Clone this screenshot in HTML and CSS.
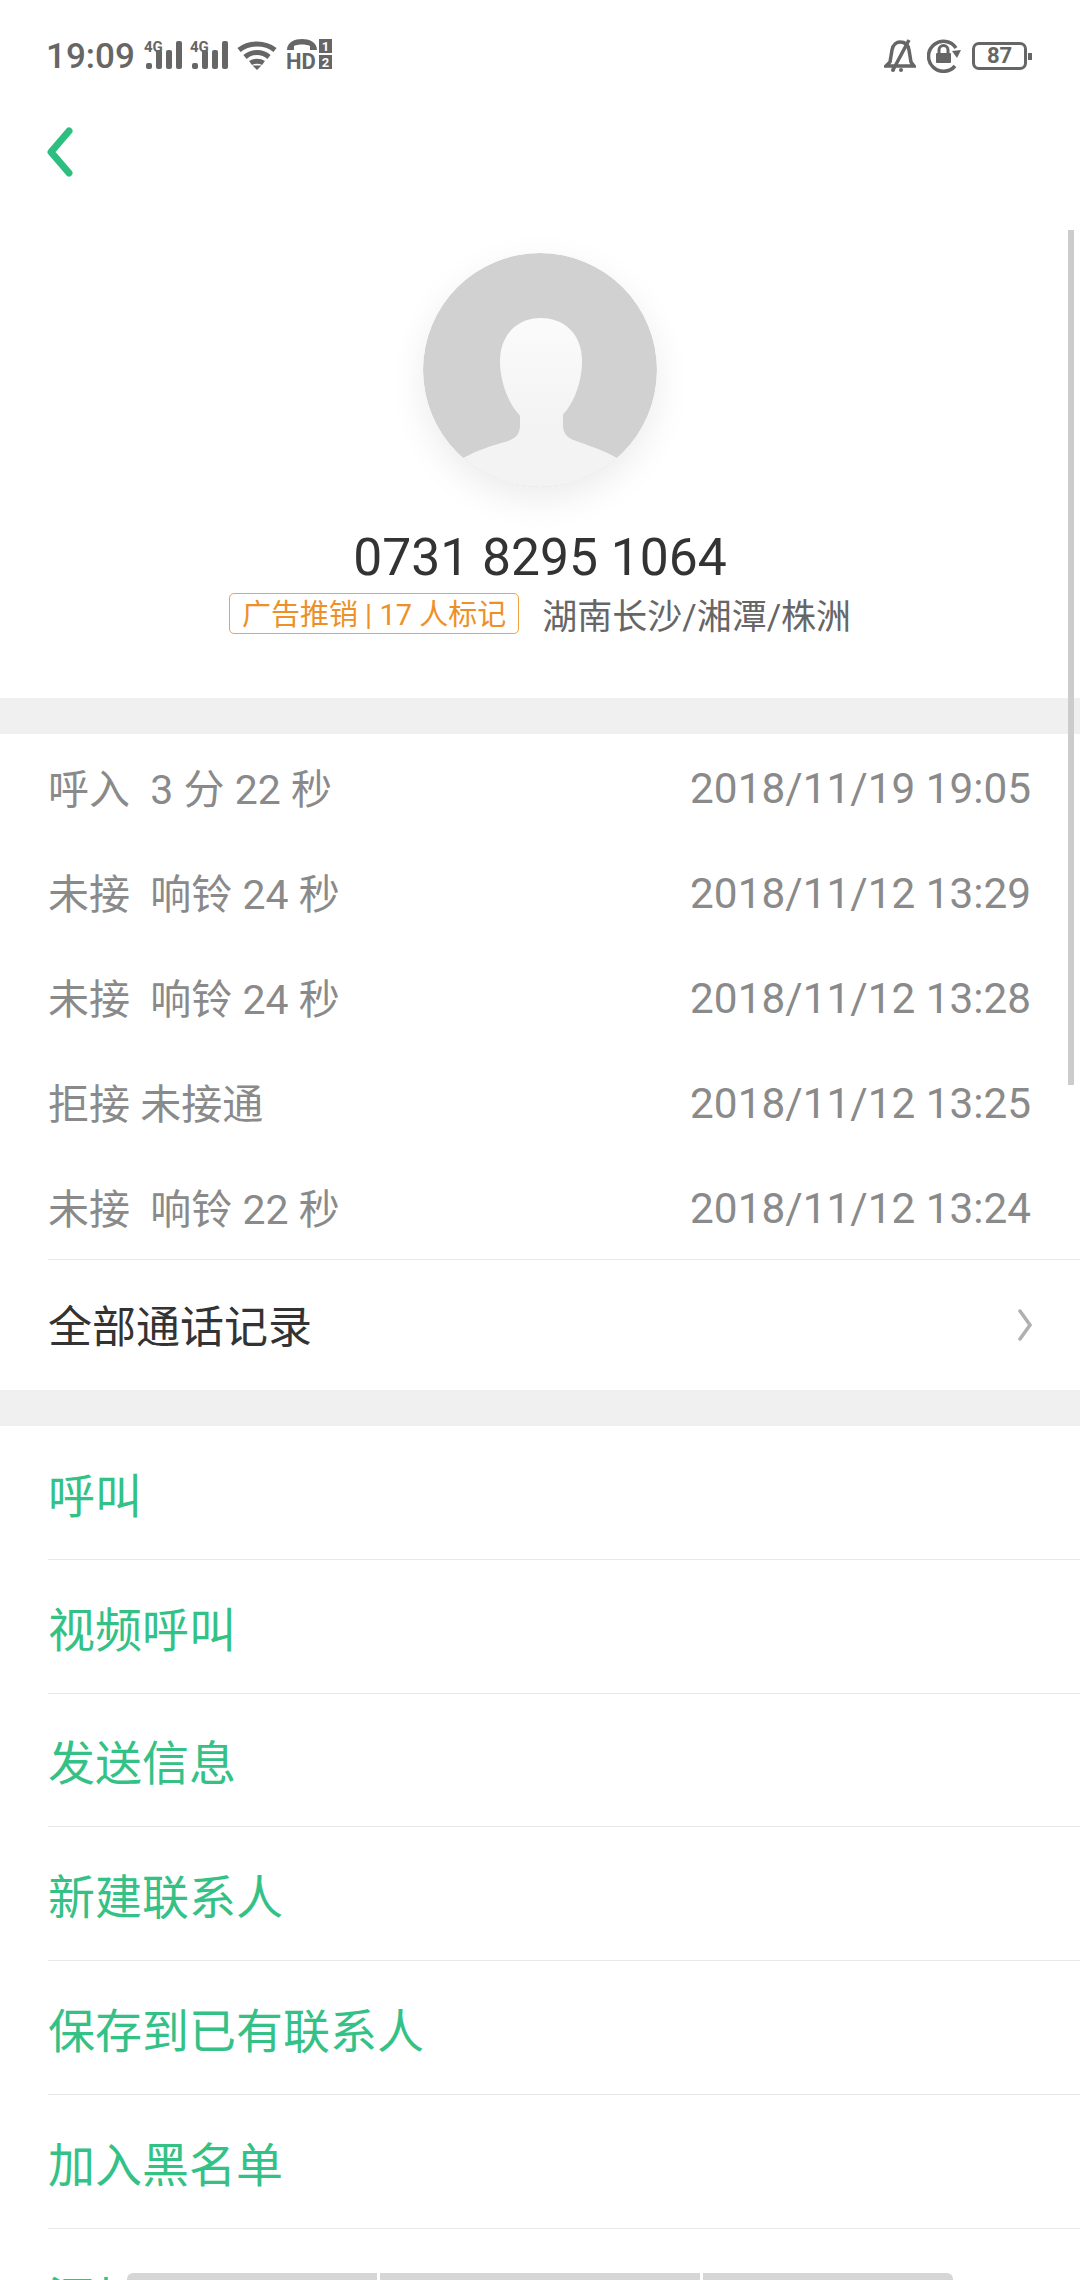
FILE: index.html
```html
<!DOCTYPE html>
<html lang="zh-CN">
<head>
    <meta charset="UTF-8">
    <meta name="viewport" content="width=device-width, initial-scale=1.0">
    <title>通话详情</title>
    <link rel="stylesheet" href="styles.css">
</head>
<body>
    <div id="status-bar">
        <span class="time">19:09</span>
        <svg class="icon-signal" width="38" height="36" viewBox="0 0 38 36">
            <text x="0" y="14" class="mini">4G</text>
            <rect x="2" y="25" width="6" height="6" rx="2"/>
            <rect x="12" y="12" width="6" height="19" rx="2"/>
            <rect x="22" y="12" width="6" height="19" rx="2"/>
            <rect x="32" y="3" width="6" height="28" rx="2"/>
        </svg>
        <svg class="icon-signal" width="38" height="36" viewBox="0 0 38 36">
            <text x="0" y="14" class="mini">4G</text>
            <rect x="2" y="25" width="6" height="6" rx="2"/>
            <rect x="12" y="12" width="6" height="19" rx="2"/>
            <rect x="22" y="12" width="6" height="19" rx="2"/>
            <rect x="32" y="3" width="6" height="28" rx="2"/>
        </svg>
        <svg class="icon-wifi" width="40" height="30" viewBox="0 0 40 30">
            <path d="M2 9 C12 1 28 1 38 9" />
            <path d="M8 16 C15 10 25 10 32 16" />
            <path d="M13.500 22 C17 19.500 23 19.500 26.500 22" />
            <polygon points="20,29 15.500,24.500 24.500,24.500" class="solid"/>
        </svg>
        <svg class="icon-hd" width="46" height="44" viewBox="0 0 46 44">
            <path class="handset" d="M1 16 C1 8 9 5 16 5 C23 5 31 8 31 16 L24 16 L24 12 C20 10 12 10 8 12 L8 16 Z"/>
            <text x="0" y="35" class="hd-text">HD</text>
            <rect x="33" y="5" width="13" height="14"/>
            <rect x="33" y="21" width="13" height="14"/>
            <text x="39.500" y="17" class="sim">1</text>
            <text x="39.500" y="33" class="sim">2</text>
        </svg>
        <div class="status-right">
            <svg class="icon-bell" width="32" height="34" viewBox="0 0 32 34">
                <path d="M6 23 L8 11 C9 5 13 3 16 3 C20 3 24 5 25 11 L27 23 L30 27 L2 27 Z"/>
                <path d="M25 1 L9 31"/>
                <circle class="solid" cx="9" cy="31" r="2"/>
                <circle class="solid" cx="17" cy="31" r="2"/>
            </svg>
            <svg class="icon-lock" width="34" height="34" viewBox="0 0 34 34">
                <path d="M28 27 A15 15 0 1 1 29 9"/>
                <polygon class="solid" points="25,12 34,11 30,19"/>
                <rect class="solid" x="9" y="14" width="15" height="10" rx="1"/>
                <path class="thin" d="M12 14 V11 A4.500 4.500 0 0 1 21 11 V14"/>
            </svg>
            <div class="battery"><span class="level">87</span></div>
            <span class="battery-tip"></span>
        </div>
    </div>

    <div id="top-bar">
        <svg width="26" height="50" viewBox="0 0 26 50">
            <path d="M22 4 L4 25 L22 46" />
        </svg>
    </div>

    <!-- Fiche du numéro -->
    <div id="profile">
        <svg class="avatar" width="234" height="234" viewBox="0 0 234 234">
            <defs>
                <linearGradient id="head-fill" x1="0" y1="0" x2="0" y2="1">
                    <stop offset="0" stop-color="#fbfbfb"/>
                    <stop offset="1" stop-color="#f3f3f3"/>
                </linearGradient>
            </defs>
            <circle cx="117" cy="117" r="117" fill="#d1d1d1"/>
            <path fill="#f3f3f3" d="M40 205 C55 197 70 192 82 189 C92 186 97 182 97 172 L97 155 L140 155 L140 172 C140 182 146 186 156 189 C170 194 182 198 194 205 A117 117 0 0 1 40 205 Z"/>
            <path fill="url(#head-fill)" d="M118 65 C141 65 159 81 159 108 C159 140 140 173 118 173 C96 173 77 140 77 108 C77 81 95 65 118 65 Z"/>
        </svg>
        <div class="number">0731 8295 1064</div>
        <div class="meta">
            <span class="tag">广告推销 | 17 人标记</span>
            <span class="location">湖南长沙/湘潭/株洲</span>
        </div>
    </div>

    <div class="band"></div>

    <!-- Historique des appels -->
    <div id="history">
        <div class="call"><span class="call-type">呼入  3 分 22 秒</span><span class="call-date">2018/11/19 19:05</span></div>
        <div class="call"><span class="call-type">未接  响铃 24 秒</span><span class="call-date">2018/11/12 13:29</span></div>
        <div class="call"><span class="call-type">未接  响铃 24 秒</span><span class="call-date">2018/11/12 13:28</span></div>
        <div class="call"><span class="call-type">拒接 未接通</span><span class="call-date">2018/11/12 13:25</span></div>
        <div class="call"><span class="call-type">未接  响铃 22 秒</span><span class="call-date">2018/11/12 13:24</span></div>
        <div class="all-calls">
            <span>全部通话记录</span>
            <svg width="14" height="32" viewBox="0 0 14 32">
                <path d="M2 2 L12 16 L2 30"/>
            </svg>
        </div>
    </div>

    <div class="band"></div>

    <!-- Actions -->
    <div id="actions">
        <div class="action">呼叫</div>
        <div class="action">视频呼叫</div>
        <div class="action">发送信息</div>
        <div class="action">新建联系人</div>
        <div class="action">保存到已有联系人</div>
        <div class="action">加入黑名单</div>
        <div class="action">添加标记</div>
    </div>

    <div id="scrollbar"></div>
    <div id="bottom-tabs">
        <span class="tab tab-first"></span>
        <span class="tab tab-middle"></span>
        <span class="tab tab-last"></span>
    </div>
</body>
</html>
```
FILE: styles.css
```css
html, body {
    margin: 0;
    padding: 0;
}

body {
    position: relative;
    width: 1080px;
    height: 2280px;
    overflow: hidden;
    background-color: #fff;
    font-family: Roboto, "Noto Sans CJK SC", sans-serif;
    color: #333;
}

/* Barre d'état */
#status-bar {
    display: flex;
    align-items: center;
    height: 112px;
    padding-left: 46px;
    padding-right: 48px;
    color: #666;
    box-sizing: border-box;
}

.time {
    width: 98px;
    font-size: 35px;
    font-weight: 500;
}

#status-bar svg {
    fill: #666;
    flex: none;
}

.icon-signal {
    margin-right: 8px;
}

.icon-wifi {
    margin-right: 9px;
    margin-left: 1px;
}

.icon-wifi path {
    fill: none;
    stroke: #666;
    stroke-width: 5;
}

.mini {
    font-family: Roboto, sans-serif;
    font-size: 15px;
    font-weight: 700;
}

.hd-text {
    font-family: Roboto, sans-serif;
    font-size: 22px;
    font-weight: 700;
}

.sim {
    font-family: Roboto, sans-serif;
    font-size: 13px;
    font-weight: 700;
    fill: #fff;
    text-anchor: middle;
}

.status-right {
    display: flex;
    align-items: center;
    margin-left: auto;
}

.icon-bell {
    margin-right: 11px;
}

#status-bar .icon-bell path,
#status-bar .icon-lock path {
    fill: none;
    stroke: #666;
    stroke-width: 3.500;
}

#status-bar .icon-lock .thin {
    stroke-width: 3;
}

.icon-lock {
    margin-right: 11px;
}

.battery {
    display: flex;
    align-items: center;
    justify-content: center;
    box-sizing: border-box;
    width: 55px;
    height: 28px;
    border: 3px solid #666;
    border-radius: 7px;
}

.level {
    font-size: 22px;
    font-weight: 700;
    line-height: 1;
}

.battery-tip {
    width: 4px;
    height: 7px;
    margin-left: 1px;
    background-color: #666;
}

/* Retour */
#top-bar {
    display: flex;
    align-items: center;
    height: 80px;
    padding-left: 47px;
}

#top-bar path {
    fill: none;
    stroke: #2dbf7f;
    stroke-width: 7;
    stroke-linecap: round;
    stroke-linejoin: round;
}

/* Fiche */
#profile {
    display: flex;
    flex-direction: column;
    align-items: center;
    padding-top: 61px;
    padding-bottom: 64px;
}

.avatar {
    border-radius: 50%;
    box-shadow: 0 12px 36px rgba(0, 0, 0, 0.08);
}

.number {
    margin-top: 41px;
    font-size: 51.600px;
    line-height: 60px;
    color: #333;
}

.meta {
    display: flex;
    align-items: center;
    gap: 23px;
    margin-top: 5px;
    height: 41px;
}

.tag {
    box-sizing: border-box;
    height: 41px;
    padding: 0 12px;
    border: 1px solid #f0a545;
    border-radius: 5px;
    font-size: 29px;
    line-height: 43px;
    color: #ee9028;
    white-space: pre;
}

.location {
    padding-bottom: 1px;
    font-size: 35px;
    color: #666;
}

.band {
    height: 36px;
    background-color: #f0f0f0;
}

/* Historique */
#history {
    padding-left: 48px;
}

.call {
    display: flex;
    justify-content: space-between;
    align-items: center;
    height: 105px;
    padding-right: 49px;
    color: #8a8a8a;
}

.call-type {
    margin-bottom: 2px;
    font-size: 41px;
    white-space: pre;
}

.call-date {
    margin-top: 3px;
    font-size: 42.300px;
}

.all-calls {
    display: flex;
    justify-content: space-between;
    align-items: center;
    box-sizing: border-box;
    height: 131px;
    padding-right: 48px;
    border-top: 1px solid #e8e8e8;
    font-size: 44px;
    color: #333;
}

.all-calls span {
    margin-bottom: 2px;
}

.all-calls path {
    fill: none;
    stroke: #b0b0b0;
    stroke-width: 3.500;
    stroke-linecap: round;
}

/* Actions */
#actions {
    padding-left: 48px;
}

.action {
    display: flex;
    align-items: center;
    box-sizing: border-box;
    height: 133.800px;
    border-bottom: 1px solid #e8e8e8;
    font-size: 47px;
    color: #34c186;
}

#scrollbar {
    position: absolute;
    top: 230px;
    left: 1068px;
    width: 6px;
    height: 855px;
    background-color: #ccc;
}

#bottom-tabs {
    position: absolute;
    left: 127px;
    bottom: 0;
    display: flex;
    gap: 3px;
    height: 7px;
}

.tab {
    background-color: #d6d6d6;
}

.tab-first {
    width: 250px;
    border-top-left-radius: 6px;
}

.tab-middle {
    width: 320px;
}

.tab-last {
    width: 250px;
    border-top-right-radius: 6px;
}
```
